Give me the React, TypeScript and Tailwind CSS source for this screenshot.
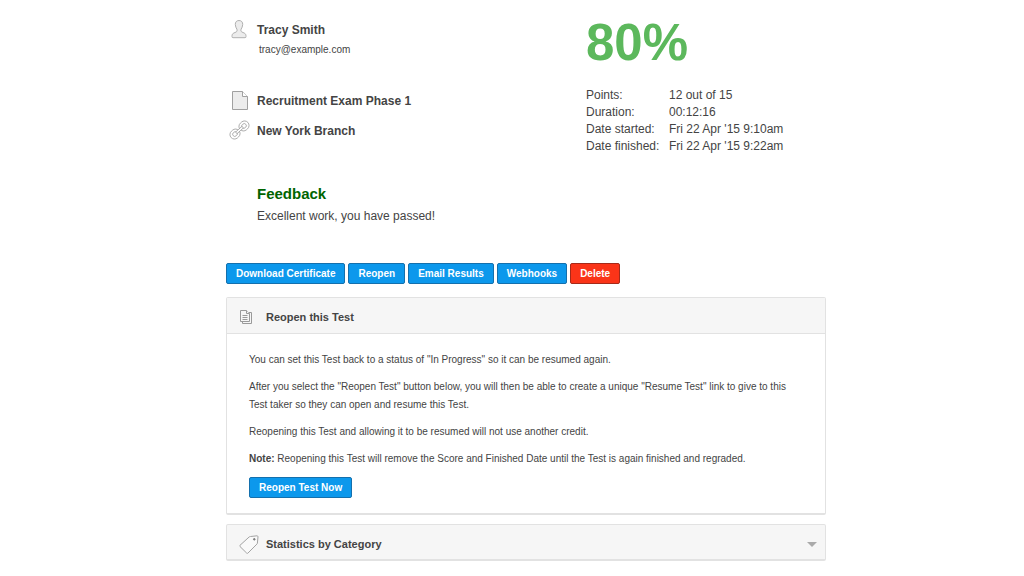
import type { ButtonHTMLAttributes, ReactNode } from 'react';

const stats = [
  { label: 'Points:', value: '12 out of 15' },
  { label: 'Duration:', value: '00:12:16' },
  { label: 'Date started:', value: "Fri 22 Apr '15 9:10am" },
  { label: 'Date finished:', value: "Fri 22 Apr '15 9:22am" },
];

const actions = ['Download Certificate', 'Reopen', 'Email Results', 'Webhooks'];

function UserIcon() {
  return (
    <svg viewBox="0 0 19 20" className="w-[19px] h-5" fill="#ececec" stroke="#b0b0b0" aria-hidden="true">
      <path d="M9 .5C6.500.500 5.200 2.200 5.300 4.500c.1 2 .8 3.400 1.600 4.700.4 1.200.2 2.300-.8 2.800l-2.400 1.100c-1.300.6-1.700 1.700-1.700 3.200v.400c0 .6.3 1 1 1h12c.7 0 1-.4 1-1v-.400c0-1.500-.4-2.600-1.700-3.200L11.900 12c-1-.5-1.200-1.600-.8-2.800.8-1.300 1.500-2.700 1.600-4.700C12.800 2.200 11.500.5 9 .5z" />
    </svg>
  );
}

function FileIcon() {
  return (
    <svg viewBox="0 0 19 20" className="w-[19px] h-5" fill="#ececec" stroke="#a0a0a0" aria-hidden="true">
      <path d="M2.500.5h10l5 5v13h-15z" />
      <path d="M12.500.5v5h5" fill="#fff" />
    </svg>
  );
}

function LinkIcon() {
  return (
    <svg viewBox="0 0 19 20" className="w-[19px] h-5 overflow-visible" fill="#fff" aria-hidden="true">
      <g transform="rotate(-42 9.500 9)" stroke="#a0a0a0" strokeWidth=".8">
        <rect x="-1.800" y="4.500" width="10.500" height="9" rx="4.500" />
        <rect x="1" y="6.900" width="5" height="4.200" rx="2.100" />
        <rect x="10.300" y="4.500" width="10.500" height="9" rx="4.500" />
        <rect x="13" y="6.900" width="5" height="4.200" rx="2.100" />
        <rect x="5" y="7.900" width="9" height="2.200" rx="1.100" />
      </g>
    </svg>
  );
}

function DocumentsIcon() {
  return (
    <svg viewBox="0 0 14 15" className="w-[14px] h-[15px]" fill="#f6f6f6" stroke="#9a9a9a" aria-hidden="true">
      <path d="M8.500 2.500h4v11h-9v-2" />
      <path d="M1.500.5h6l3 3v8h-9z" />
      <path d="M7.500.5v3h3M3.500 5.500h5M3.500 7.500h5M3.500 9.500h5" />
    </svg>
  );
}

function TagIcon() {
  return (
    <svg viewBox="0 0 20 19" className="w-5 h-[19px]" fill="#fafafa" stroke="#a3a3a3" aria-hidden="true">
      <path d="M11.500 1.500 18 .8c.6 0 1 .4 1 1l-.6 6.200c0 .5-.2.800-.5 1.100l-9 9c-.4.400-.8.400-1.200 0L1 11.500c-.4-.4-.4-.8 0-1.200l9-8.200c.4-.4.9-.5 1.500-.6z" />
      <circle cx="15.300" cy="4.300" r=".8" fill="#777" stroke="#777" />
    </svg>
  );
}

function Button({ danger, ...props }: ButtonHTMLAttributes<HTMLButtonElement> & { danger?: boolean }) {
  return (
    <button
      type="button"
      className={`rounded-xs border px-[9px] text-[10px] leading-[19px] font-bold text-white ${
        danger ? 'border-[#a52a1a] bg-[#fa3418]' : 'border-[#1470ad] bg-[#0c98ec]'
      }`}
      {...props}
    />
  );
}

function DetailRow({ icon, children }: { icon: ReactNode; children: ReactNode }) {
  return (
    <div className="flex items-center gap-2 pl-1 text-[12px] leading-5 font-bold">
      {icon}
      {children}
    </div>
  );
}

export default function App() {
  return (
    <div className="min-h-screen bg-white pt-5 pb-4 pl-7 font-['Liberation_Sans',Arial,sans-serif] text-[#444]">
      <main className="mx-auto max-w-[600px]">
        {/* Candidate and score */}
        <div className="grid grid-cols-[3fr_2fr]">
          <section>
            <DetailRow icon={<UserIcon />}>
              <h1>Tracy Smith</h1>
            </DetailRow>
            <p className="pl-[33px] text-[10px] leading-5">tracy@example.com</p>
            <div className="mt-[31px] space-y-[10px]">
              <DetailRow icon={<FileIcon />}>
                <p>Recruitment Exam Phase 1</p>
              </DetailRow>
              <DetailRow icon={<LinkIcon />}>
                <p>New York Branch</p>
              </DetailRow>
            </div>
          </section>

          <section>
            <p className="text-[51px] leading-[46px] font-bold text-[#5cb85c]">80%</p>
            <table className="mt-[21px] text-[12px] leading-[17px]">
              <tbody>
                {stats.map(({ label, value }) => (
                  <tr key={label}>
                    <th scope="row" className="w-[83px] p-0 text-left font-normal">{label}</th>
                    <td className="p-0">{value}</td>
                  </tr>
                ))}
              </tbody>
            </table>
          </section>
        </div>

        {/* Feedback */}
        <section className="mt-[29px] pl-[31px]">
          <h2 className="text-[15px] leading-5 font-bold text-[#006400]">Feedback</h2>
          <p className="mt-[2px] text-[12px] leading-5">Excellent work, you have passed!</p>
        </section>

        {/* Actions */}
        <div className="mt-[37px] flex flex-wrap gap-[3px]">
          {actions.map(action => (
            <Button key={action}>{action}</Button>
          ))}
          <Button danger>Delete</Button>
        </div>

        {/* Reopen panel */}
        <section className="mt-[13px] rounded-xs border border-b-2 border-[#e2e2e2]">
          <header className="flex h-[36px] items-center border-b border-[#e2e2e2] bg-[#f6f6f6] pt-1 pl-3">
            <span className="w-[27px]">
              <DocumentsIcon />
            </span>
            <h2 className="text-[11px] font-bold">Reopen this Test</h2>
          </header>
          <div className="space-y-[9px] px-[22px] pt-[17px] pb-[15px] text-[10px] leading-[18px]">
            <p>You can set this Test back to a status of "In Progress" so it can be resumed again.</p>
            <p>
              After you select the "Reopen Test" button below, you will then be able to create a unique "Resume Test" link
              to give to this Test taker so they can open and resume this Test.
            </p>
            <p>Reopening this Test and allowing it to be resumed will not use another credit.</p>
            <p>
              <b>Note:</b> Reopening this Test will remove the Score and Finished Date until the Test is again finished
              and regraded.
            </p>
            <Button>Reopen Test Now</Button>
          </div>
        </section>

        {/* Statistics panel */}
        <section className="mt-[9px] rounded-xs border border-b-2 border-[#e2e2e2] bg-[#f6f6f6]">
          <h2>
            <button type="button" className="flex h-[34px] w-full items-center pt-1 pr-2 pl-3 text-left text-[11px] font-bold">
              <span className="w-[27px]">
                <TagIcon />
              </span>
              Statistics by Category
              <svg viewBox="0 0 10 5" className="ml-auto w-[10px] h-[5px]" fill="#aaa" aria-hidden="true">
                <path d="M0 0h10L5 5z" />
              </svg>
            </button>
          </h2>
        </section>
      </main>
    </div>
  );
}
